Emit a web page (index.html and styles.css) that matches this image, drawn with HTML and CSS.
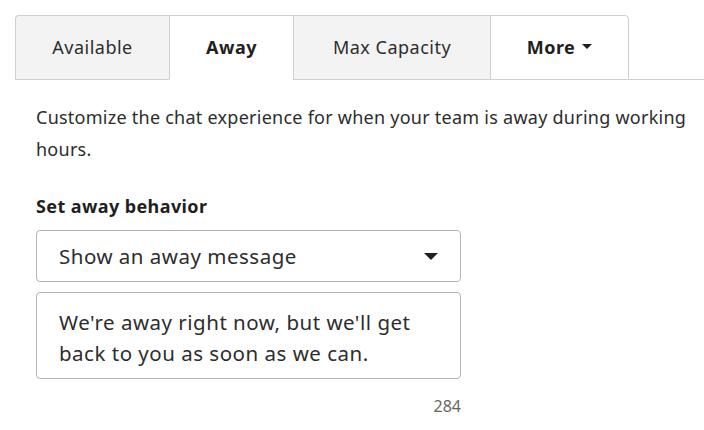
FILE: index.html
```html
<!DOCTYPE html>
<html>
<head>
  <meta charset="utf-8" />
  <title>Away settings</title>
  <link rel="stylesheet" href="styles.css">
</head>
<body>
  <div class="tabs">
    <div class="tab tab-muted tab-first">Available</div>
    <div class="tab tab-active">Away</div>
    <div class="tab tab-muted tab-wide">Max Capacity</div>
    <div class="tab tab-more">More <span class="caret"></span></div>
    <div class="tab-fill"></div>
  </div>
  <div class="panel">
    <p class="intro">Customize the chat experience for when your team is away during working hours.</p>
    <label class="field-label">Set away behavior</label>
    <div class="select">
      <span>Show an away message</span>
      <span class="caret caret-lg"></span>
    </div>
    <div class="textarea">We're away right now, but we'll get back to you as soon as we can.</div>
    <div class="counter">284</div>
  </div>
</body>
</html>
```
FILE: styles.css
```css
:root {
  --text-color: #2d2d2d;
  --border-color: #cfcfcf;
  --input-border: #b5b5b5;
  --muted-bg: #f3f3f3;
}
body {
  margin: 0;
  padding: 15px 0 0 15px;
  font-family: "Noto Sans", Arial, sans-serif;
  color: var(--text-color);
  background: #ffffff;
}
.tabs {
  display: flex;
  height: 65px;
}
.tab {
  display: flex;
  align-items: center;
  justify-content: center;
  box-sizing: border-box;
  padding-bottom: 2px;
  font-size: 18px;
  letter-spacing: 0.5px;
  border-top: 1px solid var(--border-color);
  border-left: 1px solid var(--border-color);
  border-bottom: 1px solid var(--border-color);
}
.tab-muted {
  background: var(--muted-bg);
}
.tab-first {
  width: 154px;
  border-top-left-radius: 4px;
}
.tab-active {
  width: 124px;
  font-weight: 700;
  color: #1f1f1f;
  border-bottom-color: #ffffff;
}
.tab-wide {
  width: 197px;
}
.tab-more {
  width: 139px;
  font-weight: 700;
  color: #1f1f1f;
  border-right: 1px solid var(--border-color);
  border-top-right-radius: 4px;
}
.tab-fill {
  flex: 1;
  border-bottom: 1px solid var(--border-color);
}
.caret {
  display: inline-block;
  margin-left: 7px;
  border-left: 5px solid transparent;
  border-right: 5px solid transparent;
  border-top: 5px solid #1f1f1f;
}
.caret-lg {
  margin-left: 0;
  border-left-width: 7px;
  border-right-width: 7px;
  border-top-width: 7px;
}
.panel {
  width: 425px;
  padding: 0 0 0 21px;
}
.intro {
  width: 660px;
  margin: 21px 0 0;
  font-size: 18px;
  line-height: 32px;
  letter-spacing: 0.25px;
}
.field-label {
  display: block;
  margin-top: 29px;
  font-size: 18px;
  font-weight: 700;
  letter-spacing: 0.4px;
  color: #1f1f1f;
}
.select {
  display: flex;
  align-items: center;
  justify-content: space-between;
  box-sizing: border-box;
  height: 52px;
  margin-top: 12px;
  padding: 0 22px;
  font-size: 20.5px;
  letter-spacing: 0.5px;
  border: 1px solid var(--input-border);
  border-radius: 4px;
}
.textarea {
  box-sizing: border-box;
  height: 87px;
  margin-top: 10px;
  padding: 14px 22px;
  font-size: 20.5px;
  line-height: 31px;
  letter-spacing: 0.5px;
  border: 1px solid var(--input-border);
  border-radius: 4px;
}
.counter {
  margin-top: 16px;
  text-align: right;
  font-size: 16px;
  color: #666666;
}
```
